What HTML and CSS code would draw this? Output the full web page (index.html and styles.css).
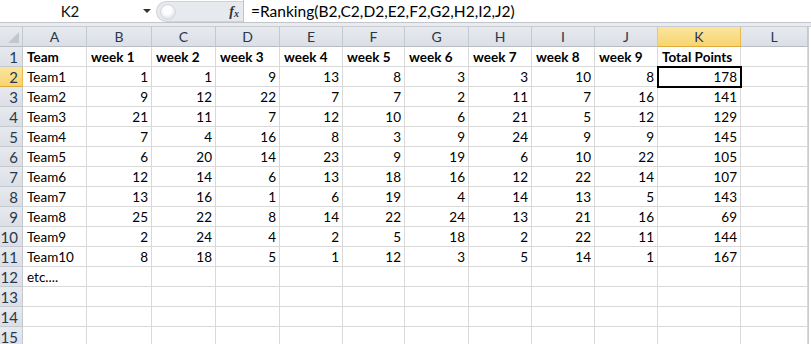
FILE: index.html
```html
<!DOCTYPE html>
<html lang="en">
<head>
    <meta charset="UTF-8">
    <title>Ranking</title>
    <link rel="stylesheet" href="styles.css">
</head>
<body>
    <div class="formula-bar">
        <div class="name-box">
            <span class="name-text">K2</span>
            <span class="name-arrow"></span>
        </div>
        <div class="bar-tools">
            <div class="pill"><span class="knob"></span></div>
            <span class="fx">f<sub>x</sub></span>
        </div>
        <div class="formula-input">=Ranking(B2,C2,D2,E2,F2,G2,H2,I2,J2)</div>
    </div>
    <div class="band"></div>

    <div class="sheet" id="sheet"></div>

    <script>
        const cols = ['A', 'B', 'C', 'D', 'E', 'F', 'G', 'H', 'I', 'J', 'K', 'L'];
        const head = ['Team', 'week 1', 'week 2', 'week 3', 'week 4', 'week 5', 'week 6', 'week 7', 'week 8', 'week 9', 'Total Points'];
        const data = [
            ['Team1', 1, 1, 9, 13, 8, 3, 3, 10, 8, 178],
            ['Team2', 9, 12, 22, 7, 7, 2, 11, 7, 16, 141],
            ['Team3', 21, 11, 7, 12, 10, 6, 21, 5, 12, 129],
            ['Team4', 7, 4, 16, 8, 3, 9, 24, 9, 9, 145],
            ['Team5', 6, 20, 14, 23, 9, 19, 6, 10, 22, 105],
            ['Team6', 12, 14, 6, 13, 18, 16, 12, 22, 14, 107],
            ['Team7', 13, 16, 1, 6, 19, 4, 14, 13, 5, 143],
            ['Team8', 25, 22, 8, 14, 22, 24, 13, 21, 16, 69],
            ['Team9', 2, 24, 4, 2, 5, 18, 2, 22, 11, 144],
            ['Team10', 8, 18, 5, 1, 12, 3, 5, 14, 1, 167],
            ['etc....']
        ];

        const sheet = document.getElementById('sheet');

        function cell(cls, text) {
            const el = document.createElement('div');
            el.className = cls;
            if (text !== undefined) el.textContent = text;
            sheet.appendChild(el);
            return el;
        }

        // column headers
        cell('corner').appendChild(document.createElement('span')).className = 'corner-mark';
        cols.forEach(c => cell(c === 'K' ? 'col-head selected' : 'col-head', c));

        // row 1
        cell('row-head', 1);
        cols.forEach((c, i) => cell('cell bold', head[i] || ''));

        // data rows
        for (let r = 0; r < 14; r++) {
            const rowNum = r + 2;
            cell(rowNum === 2 ? 'row-head selected' : 'row-head', rowNum);
            const row = data[r] || [];
            cols.forEach((c, i) => {
                const v = row[i];
                let cls = typeof v === 'number' ? 'cell num' : 'cell';
                if (rowNum === 2 && c === 'K') cls += ' active';
                cell(cls, v === undefined ? '' : v);
            });
        }
    </script>
</body>
</html>
```

FILE: styles.css
```css
* {
    margin: 0;
    padding: 0;
    box-sizing: border-box;
}

body {
    width: 811px;
    height: 344px;
    overflow: hidden;
    background: #fff;
    font-family: 'Lato', 'Liberation Sans', sans-serif;
    font-size: 13.5px;
    color: #000;
}

/* formula bar */
.formula-bar {
    display: flex;
    height: 23px;
    border-bottom: 1px solid #c2c6cc;
    background: #fff;
}

.name-box {
    width: 156px;
    display: flex;
    align-items: center;
    position: relative;
}

.name-text {
    width: 140px;
    text-align: center;
    font-family: 'Lato', sans-serif;
    font-size: 15px;
    color: #111;
}

.name-arrow {
    width: 0;
    height: 0;
    border-left: 4px solid transparent;
    border-right: 4px solid transparent;
    border-top: 4px solid #333;
    margin-left: 3px;
}

.bar-tools {
    width: 87px;
    display: flex;
    align-items: center;
    justify-content: space-between;
    background: #e6e9ed;
    border-radius: 11px 0 0 11px;
    border: 1px solid #cfd3d8;
    border-right: none;
    margin: 1px 0 0;
    padding: 0 4px 0 3px;
}

.pill {
    width: 16px;
    height: 16px;
    border-radius: 50%;
    background: radial-gradient(circle at 45% 40%, #fdfdfd 0 35%, #e2e4e7 70%);
    border: 1px solid #d6d9dd;
}

.fx {
    font-family: 'Liberation Serif', serif;
    font-style: italic;
    font-weight: bold;
    font-size: 14px;
    color: #333;
    line-height: 1;
}

.fx sub {
    font-size: 10px;
    vertical-align: -1px;
}

.formula-input {
    flex: 1;
    border-left: 1px solid #c2c6cc;
    padding: 2px 0 0 7px;
    font-size: 15.5px;
    white-space: nowrap;
}

.band {
    height: 4px;
    background: #e9ecef;
    border-bottom: 1px solid #c9cdd2;
}

/* grid */
.sheet {
    display: grid;
    grid-template-columns: 23px 64px 65px 64px 64px 63px 62px 64px 63px 63px 63px 83px 67px;
    grid-auto-rows: 20px;
    border-right: 1px solid #c9ccd0;
    width: 809px;
}

.corner,
.col-head,
.row-head {
    background: linear-gradient(#e6e9ee, #dce0e6);
    color: #27384c;
    border-right: 1px solid #c4c9cf;
    border-bottom: 1px solid #b8bdc4;
    font-family: 'Lato', sans-serif;
    font-size: 14px;
    display: flex;
    align-items: center;
    justify-content: center;
}

.row-head {
    justify-content: flex-end;
    padding-right: 4px;
    border-bottom-color: #c4c9cf;
    font-size: 15px;
}

.corner {
    position: relative;
}

.corner-mark {
    position: absolute;
    right: 3px;
    bottom: 3px;
    width: 0;
    height: 0;
    border-left: 11px solid transparent;
    border-bottom: 11px solid #c3c7cc;
}

.col-head.selected,
.row-head.selected {
    background: linear-gradient(#fbe59f, #f7d46f);
    border-right-color: #e9b850;
    border-bottom-color: #e0a93c;
}

.cell {
    border-right: 1px solid #d9d9d9;
    border-bottom: 1px solid #d9d9d9;
    padding: 2px 4px 0 4px;
    white-space: nowrap;
    overflow: visible;
    line-height: 17px;
}

.cell.bold {
    font-weight: bold;
}

.cell.num {
    text-align: right;
    padding-right: 3px;
}

.cell.active {
    outline: 2px solid #000;
    outline-offset: -1px;
    position: relative;
    z-index: 1;
}
```
